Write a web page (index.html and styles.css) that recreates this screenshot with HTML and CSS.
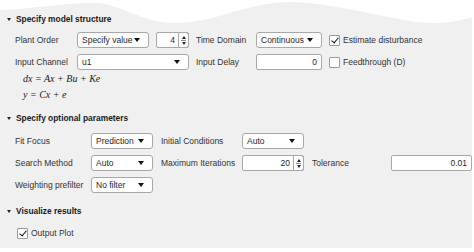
FILE: index.html
```html
<!DOCTYPE html>
<html>
<head>
<meta charset="utf-8">
<link rel="stylesheet" href="styles.css">
</head>
<body>
<div class="panel">
  <svg class="tear" width="474" height="26" viewBox="0 0 474 26" aria-hidden="true">
    <path d="M0 0 H474 V17 C462 20 452 23 432 23 C400 23 340 3 292 2 C250 1 215 23 175 23 C140 23 120 3 95 3 C60 3 25 10 0 10 Z" fill="#ffffff"/>
  </svg>

  <section class="sec">
    <div class="sec-head"><span class="caret"></span>Specify model structure</div>
    <div class="grid g1">
      <span class="lbl">Plant Order</span>
      <div class="dd"><span>Specify value</span><i class="arr"></i></div>
      <div class="spin"><span class="val">4</span><span class="btns"><i class="up"></i><i class="dn"></i></span></div>
      <span class="lbl">Time Domain</span>
      <div class="dd"><span>Continuous</span><i class="arr"></i></div>
      <label class="chk"><span class="box on"></span>Estimate disturbance</label>

      <span class="lbl">Input Channel</span>
      <div class="dd span2"><span>u1</span><i class="arr"></i></div>
      <span class="lbl">Input Delay</span>
      <div class="edit">0</div>
      <label class="chk"><span class="box"></span>Feedthrough (D)</label>
    </div>
    <div class="eqs">
      <div>dx = Ax + Bu + Ke</div>
      <div>y = Cx + e</div>
    </div>
  </section>

  <section class="sec s2">
    <div class="sec-head"><span class="caret"></span>Specify optional parameters</div>
    <div class="grid g2">
      <span class="lbl">Fit Focus</span>
      <div class="dd"><span>Prediction</span><i class="arr"></i></div>
      <span class="lbl">Initial Conditions</span>
      <div class="dd"><span>Auto</span><i class="arr"></i></div>
      <span></span><span></span>

      <span class="lbl">Search Method</span>
      <div class="dd"><span>Auto</span><i class="arr"></i></div>
      <span class="lbl">Maximum Iterations</span>
      <div class="spin"><span class="val">20</span><span class="btns"><i class="up"></i><i class="dn"></i></span></div>
      <span class="lbl">Tolerance</span>
      <div class="edit">0.01</div>

      <span class="lbl">Weighting prefilter</span>
      <div class="dd"><span>No filter</span><i class="arr"></i></div>
    </div>
  </section>

  <section class="sec s3">
    <div class="sec-head"><span class="caret"></span>Visualize results</div>
    <label class="chk out"><span class="box on"></span>Output Plot</label>
  </section>
</div>
</body>
</html>
```

FILE: styles.css
```css
* { box-sizing: border-box; }
html, body { margin: 0; padding: 0; background: #ffffff; }
body {
  font-family: "Liberation Sans", Arial, sans-serif;
  font-size: 8.5px;
  color: #333333;
  width: 474px;
  height: 252px;
  overflow: hidden;
}
.panel {
  position: relative;
  width: 472px;
  height: 248px;
  background: #f0f0f0;
  padding-top: 12px;
  overflow: hidden;
}
.tear { position: absolute; left: 0; top: 0; }
.sec { position: relative; }
.sec-head {
  height: 14px;
  line-height: 14px;
  font-weight: bold;
  color: #1a1a1a;
  font-size: 8.4px;
  display: flex;
  align-items: center;
  padding-left: 7px;
}
.caret {
  width: 0; height: 0;
  border-left: 2.5px solid transparent;
  border-right: 2.5px solid transparent;
  border-top: 3.5px solid #222;
  margin-right: 5px;
}
.grid {
  display: grid;
  grid-auto-rows: 16px;
  row-gap: 6px;
  padding-left: 15px;
  align-items: center;
}
.g1 {
  margin-top: 6px;
  grid-template-columns: 55px 72px 33px 53px 66px auto;
  column-gap: 7px;
}
.g2 {
  margin-top: 8px;
  grid-template-columns: 68px 62px 73px 62px 71px 81px;
  column-gap: 8px;
}
.span2 { grid-column: span 2; }
.lbl { white-space: nowrap; line-height: 16px; }
.dd, .edit, .spin {
  height: 16px;
  background: #fff;
  border: 1px solid #a8a8a8;
  border-radius: 3px;
  display: flex;
  align-items: center;
  white-space: nowrap;
  color: #262626;
}
.dd { padding-left: 4px; justify-content: space-between; padding-right: 8px; }
.arr {
  width: 0; height: 0;
  border-left: 3px solid transparent;
  border-right: 3px solid transparent;
  border-top: 4px solid #111;
}
.edit { justify-content: flex-end; padding-right: 4px; border-radius: 2px; }
.spin { padding: 0; border-radius: 2px; }
.spin .val { flex: 1; text-align: right; padding-right: 3px; }
.spin .btns {
  width: 11px;
  height: 16px;
  margin: -1px -1px -1px 0;
  border: 1px solid #a8a8a8;
  border-radius: 0 3px 3px 0;
  display: flex;
  flex-direction: column;
  align-items: center;
  justify-content: center;
  gap: 1px;
  position: relative;
}
.spin .btns::after {
  content: "";
  position: absolute;
  left: 2px; right: 2px; top: 7px;
  border-top: 1px solid #888;
}
.up, .dn { width: 0; height: 0; border-left: 2.5px solid transparent; border-right: 2.5px solid transparent; }
.up { border-bottom: 3px solid #222; margin-bottom: 1px; }
.dn { border-top: 3px solid #222; margin-top: 1px; }
.chk { display: flex; align-items: center; white-space: nowrap; }
.box {
  width: 11px; height: 11px;
  background: #fff;
  border: 1px solid #9a9a9a;
  border-radius: 1px;
  margin-right: 3px;
  position: relative;
}
.box.on::after {
  content: "";
  position: absolute;
  left: 3px; top: 0px;
  width: 3px; height: 6px;
  border-right: 1.5px solid #111;
  border-bottom: 1.5px solid #111;
  transform: rotate(40deg);
}
.eqs {
  margin-top: 1px;
  padding-left: 23px;
  font-family: "Liberation Serif", "Times New Roman", serif;
  font-style: italic;
  font-size: 10px;
  line-height: 16px;
  color: #222;
}
.s2 { margin-top: 8px; }
.s3 { margin-top: 11px; }
.out { margin-top: 8px; padding-left: 17px; height: 14px; }
```
